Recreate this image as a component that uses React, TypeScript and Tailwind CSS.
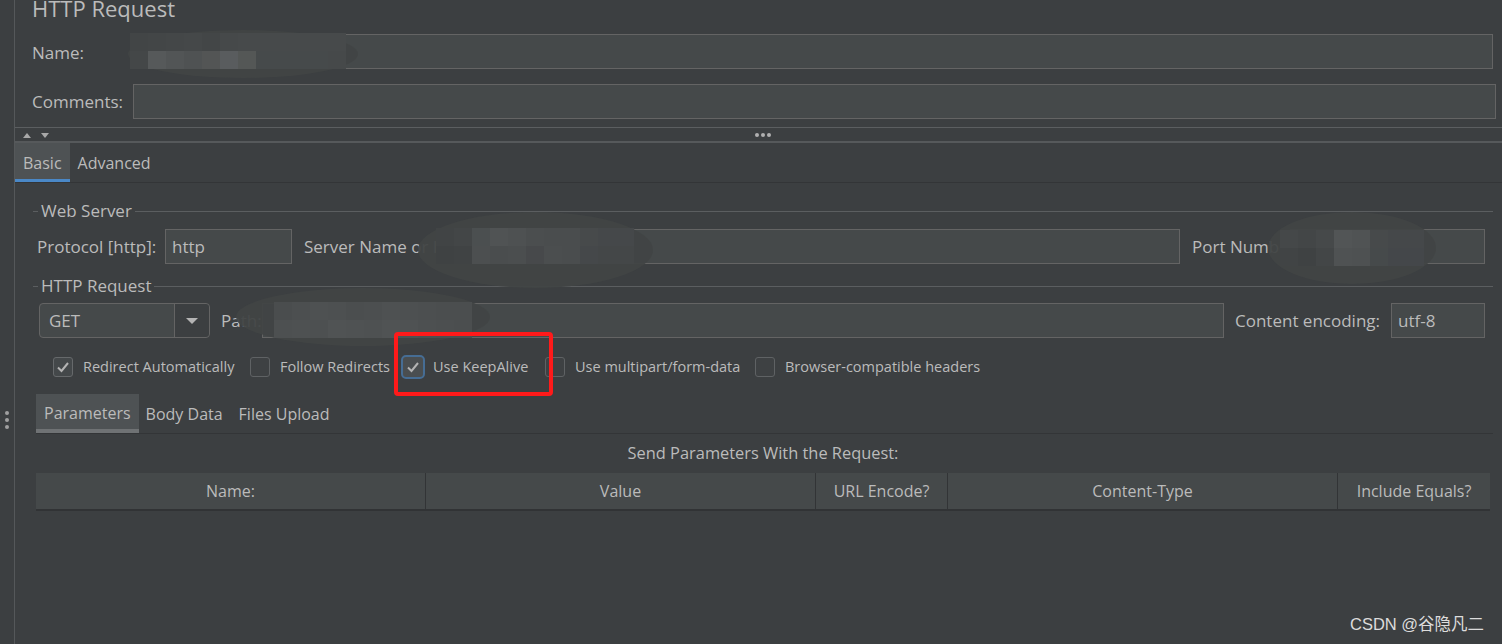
import React from 'react';

// Darcula palette
const textColor = 'text-[#bbbbbb]';

type MosaicProps = {
  left: number;
  top: number;
  width: number;
  height: number;
  cellLeft: number;
  cellTop: number;
  rows: string[][];
};

// Pixelated blur over hidden values
const Mosaic = ({ left, top, width, height, cellLeft, cellTop, rows }: MosaicProps) => (
  <div className="absolute" style={{ left, top, width, height }}>
    <div className="absolute inset-0 rounded-[50%] bg-[#414445] opacity-95" />
    <div className="absolute flex flex-col" style={{ left: cellLeft, top: cellTop }}>
      {rows.map((row, i) => (
        <div key={i} className="flex">
          {row.map((c, j) => (
            <div key={j} className="w-[18px] h-[18px]" style={{ background: c }} />
          ))}
        </div>
      ))}
    </div>
  </div>
);

const Checkbox = ({ label, checked, focused, width }: { label: string; checked?: boolean; focused?: boolean; width: string }) => (
  <div className={`flex items-center ${width}`}>
    <div
      className={
        focused
          ? 'w-[24px] h-[24px] -ml-[2px] rounded-[5px] border-2 border-[#466d94] bg-[#4a4e50] flex items-center justify-center'
          : checked
            ? 'w-[20px] h-[20px] rounded-[3px] border border-[#66696b] bg-[#44484a] flex items-center justify-center'
            : 'w-[20px] h-[20px] rounded-[3px] border border-[#5f6264] bg-[#3e4143] flex items-center justify-center'
      }
    >
      {checked && (
        <svg width="14" height="14" viewBox="0 0 14 14">
          <polyline points="2,7.5 5.5,11 12,3" fill="none" stroke="#b4b4b4" strokeWidth="2" />
        </svg>
      )}
    </div>
    <span className={`text-[14.5px] ${focused ? 'ml-[8px]' : 'ml-[10px]'} whitespace-nowrap`}>{label}</span>
  </div>
);

const Input = ({ className, value }: { className: string; value?: string }) => (
  <div className={`h-[35px] bg-[#45494a] border border-[#646464] flex items-center px-[6px] text-[17px] ${className}`}>
    {value}
  </div>
);

const Legend = ({ title }: { title: string }) => (
  <div className="flex items-center h-[24px]">
    <div className="w-[5px] border-t border-[#5b5e60]" />
    <span className="px-[3px] text-[17px] leading-[24px]">{title}</span>
    <div className="flex-1 border-t border-[#5b5e60]" />
  </div>
);

const columns = [
  { name: 'Name:', w: 'w-[390px]' },
  { name: 'Value', w: 'w-[390px]' },
  { name: 'URL Encode?', w: 'w-[132px]' },
  { name: 'Content-Type', w: 'w-[390px]' },
  { name: 'Include Equals?', w: 'flex-1' },
];

export default function App() {
  return (
    <div className={`relative w-[1502px] h-[644px] overflow-hidden bg-[#3c3f41] flex font-['Open_Sans',sans-serif] ${textColor}`}>
      {/* left collapsed strip */}
      <div className="w-[15px] shrink-0 border-r border-[#55585a] flex flex-col items-center pt-[411px] gap-[3px]">
        <div className="w-[4px] h-[4px] rounded-full bg-[#a0a0a0]" />
        <div className="w-[4px] h-[4px] rounded-full bg-[#a0a0a0]" />
        <div className="w-[4px] h-[4px] rounded-full bg-[#a0a0a0]" />
      </div>

      <div className="flex-1 flex flex-col">
        {/* header */}
        <div className="pl-[17px] h-[22px] -mt-[5px] text-[22px] leading-[27px]">HTTP Request</div>
        <div className="flex items-center pl-[17px] pr-[9px] mt-[17px]">
          <span className="w-[99px] text-[17px] pt-[3px]">Name:</span>
          <Input className="flex-1" />
        </div>
        <div className="flex items-center pl-[17px] pr-[6px] mt-[15px]">
          <span className="w-[101px] text-[17px]">Comments:</span>
          <Input className="flex-1 h-[34px]" />
        </div>

        {/* splitter */}
        <div className="mt-[8px] border-t border-[#5b5e60]" />
        <div className="relative h-[13px] flex items-center">
          <svg className="ml-[7px]" width="30" height="8" viewBox="0 0 30 8">
            <polygon points="1,7 5,2 9,7" fill="#a8a8a8" />
            <polygon points="19,2 27,2 23,7" fill="#a8a8a8" />
          </svg>
          <div className="flex-1 flex justify-center gap-[2px] pr-[28px]">
            <div className="w-[4px] h-[4px] rounded-full bg-[#b0b0b0]" />
            <div className="w-[4px] h-[4px] rounded-full bg-[#b0b0b0]" />
            <div className="w-[4px] h-[4px] rounded-full bg-[#b0b0b0]" />
          </div>
        </div>
        <div className="border-t-2 border-[#56595b]" />

        {/* Basic / Advanced tabs */}
        <div className="flex h-[40px] border-b border-[#333537]">
          <div className="px-[8px] bg-[#4e5254] border-b-[3px] border-[#4a88c7] flex items-center text-[16px] pt-[3px]">Basic</div>
          <div className="px-[8px] flex items-center text-[16px]">Advanced</div>
        </div>

        <div className="pl-[18px] pr-[9px] flex flex-col">
          <div className="mt-[16px]">
            <Legend title="Web Server" />
          </div>
          <div className="flex items-center mt-[6px] pl-[4px] pr-[8px]">
            <span className="w-[128px] text-[17px] whitespace-nowrap">Protocol [http]:</span>
            <Input className="w-[127px] h-[34px]" value="http" />
            <span className="ml-[12px] w-[136px] text-[17px] whitespace-nowrap">Server Name or IP:</span>
            <Input className="flex-1 h-[34px]" />
            <span className="ml-[12px] w-[98px] text-[17px] whitespace-nowrap">Port Number:</span>
            <Input className="w-[195px] h-[34px]" />
          </div>

          <div className="mt-[10px]">
            <Legend title="HTTP Request" />
          </div>
          <div className="flex items-center mt-[5px] pl-[6px] pr-[8px]">
            <div className="w-[171px] h-[35px] rounded-[4px] border border-[#646464] bg-[#45494a] flex">
              <span className="flex-1 flex items-center pl-[9px] text-[17px]">GET</span>
              <div className="w-[35px] border-l border-[#646464] bg-[#3c3f41] rounded-r-[4px] flex items-center justify-center">
                <svg width="12" height="8" viewBox="0 0 12 8">
                  <polygon points="0,1 12,1 6,7" fill="#b4b4b4" />
                </svg>
              </div>
            </div>
            <span className="ml-[11px] w-[41px] text-[17px]">Path:</span>
            <Input className="flex-1" />
            <span className="ml-[11px] w-[156px] text-[17px] whitespace-nowrap">Content encoding:</span>
            <Input className="w-[94px]" value="utf-8" />
          </div>

          <div className="flex items-center mt-[19px] h-[20px] pl-[20px]">
            <Checkbox label="Redirect Automatically" checked width="w-[197px]" />
            <Checkbox label="Follow Redirects" width="w-[153px]" />
            <Checkbox label="Use KeepAlive" checked focused width="w-[142px]" />
            <Checkbox label="Use multipart/form-data" width="w-[210px]" />
            <Checkbox label="Browser-compatible headers" width="w-[230px]" />
          </div>

          {/* Parameters / Body Data / Files Upload */}
          <div className="flex h-[40px] mt-[17px] ml-[3px] border-b border-[#333537]">
            <div className="px-[8px] bg-[#4e5254] border-b-[4px] border-[#6f7274] flex items-center text-[16px] pt-[3px]">Parameters</div>
            <div className="pl-[7px] pr-[8px] flex items-center text-[16px]">Body Data</div>
            <div className="px-[8px] flex items-center text-[16px]">Files Upload</div>
          </div>

          <div className="ml-[3px] mr-[3px] flex flex-col">
            <div className="h-[39px] flex items-center justify-center text-[16.4px]">Send Parameters With the Request:</div>
            <div className="flex h-[38px] bg-[#45494a] border-b-2 border-[#313335]">
              {columns.map((c, i) => (
                <div
                  key={c.name}
                  className={`${c.w} flex items-center justify-center text-[16px] ${i < columns.length - 1 ? 'border-r border-[#323436]' : ''}`}
                >
                  {c.name}
                </div>
              ))}
            </div>
          </div>
        </div>
      </div>

      {/* pixelated values */}
      <Mosaic
        left={128}
        top={30}
        width={230}
        height={48}
        cellLeft={2}
        cellTop={3}
        rows={[
          ['#424546', '#434647', '#444748', '#454849', '#434647', '#46494a', '#474a4b', '#474a4b', '#474a4b', '#474a4b', '#474a4b', '#474a4b'],
          ['#444748', '#56595a', '#525556', '#4f5253', '#535555', '#595c5e', '#545756', '#464a4b', '#464a4b', '#464a4b', '#464a4b', '#46494a'],
        ]}
      />
      <Mosaic
        left={418}
        top={212}
        width={235}
        height={76}
        cellLeft={18}
        cellTop={16}
        rows={[
          ['#414445', '#434647', '#4b4f50', '#505354', '#4e5152', '#4b4e4f', '#4a4d4e', '#4a4d4e', '#474a4b', '#45484a', '#45484a'],
          ['#3f4243', '#404344', '#4c4f50', '#4a4d4e', '#4b4e4f', '#47494b', '#4b4e4f', '#4a4d4e', '#45484a', '#444748', '#444748'],
        ]}
      />
      <Mosaic
        left={1268}
        top={212}
        width={168}
        height={72}
        cellLeft={12}
        cellTop={18}
        rows={[
          ['#454849', '#434647', '#46494a', '#525556', '#505354', '#474a4b', '#45484a', '#45484a'],
          ['#414445', '#3f4243', '#434647', '#4f5253', '#4e5152', '#464a4b', '#44474a', '#44474a'],
        ]}
      />
      <Mosaic
        left={236}
        top={288}
        width={254}
        height={58}
        cellLeft={38}
        cellTop={14}
        rows={[
          ['#4a4d4e', '#4c4f50', '#4e5152', '#4d5051', '#4b4e4f', '#4c4f50', '#4e5152', '#4d5051', '#4c4f50', '#4b4e4f', '#4b4e4f'],
          ['#4d5051', '#4e5152', '#4d5051', '#505354', '#4f5253', '#4e5152', '#505354', '#4f5253', '#4d5051', '#4c4f50', '#4b4e4f'],
        ]}
      />

      {/* red highlight annotation */}
      <div className="absolute left-[394px] top-[332px] w-[159px] h-[64px] border-[4px] border-[#ff1a1a] rounded-[4px]" />

      {/* watermark */}
      <div className="absolute left-[1350px] top-[612px] text-[16.5px] text-[#dcdcdc] font-['Liberation_Sans','Noto_Sans_CJK_SC',sans-serif]">
        CSDN @谷隐凡二
      </div>
    </div>
  );
}
